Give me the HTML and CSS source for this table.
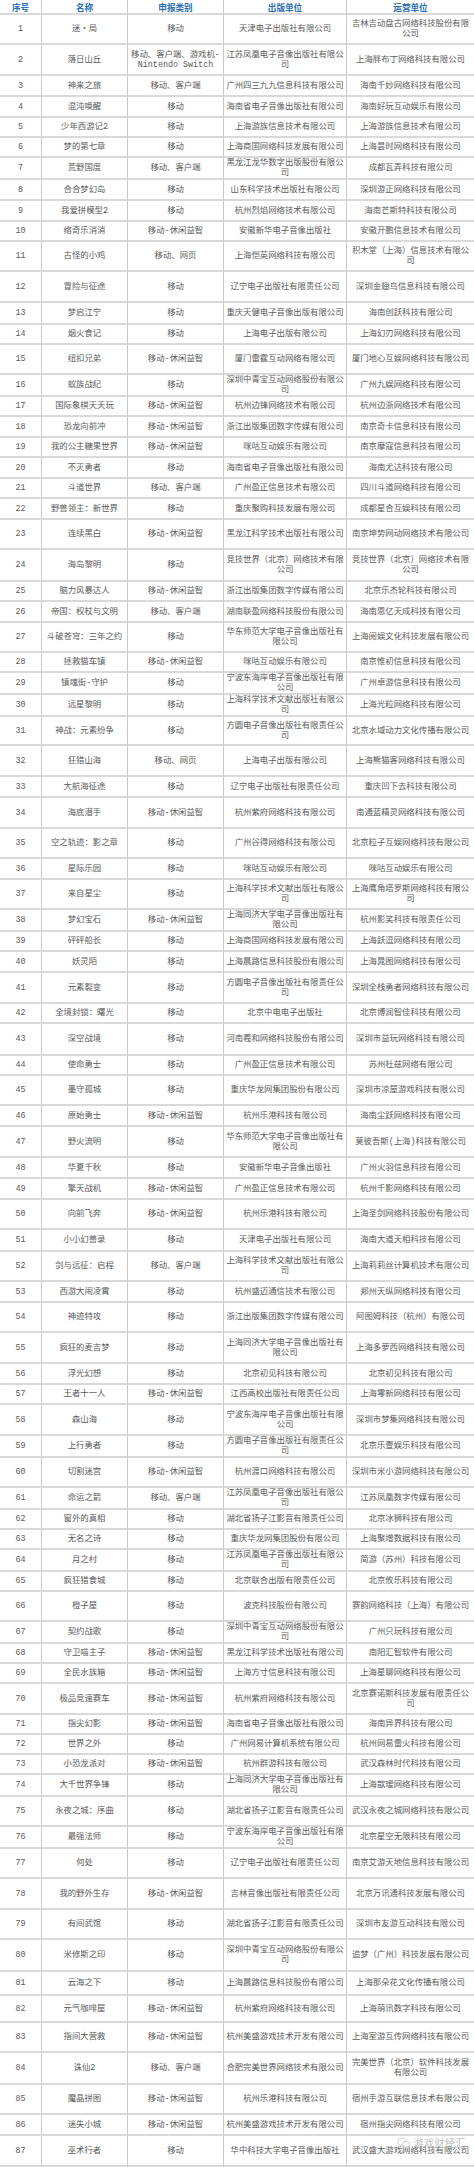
FILE: index.html
```html
<!DOCTYPE html>
<html lang="zh-CN">
<head>
<meta charset="utf-8">
<title>游戏审批名单</title>
<link rel="stylesheet" href="styles.css">
</head>
<body>
<div class="wrap">
<table class="list">
<colgroup><col class="c1"><col class="c2"><col class="c3"><col class="c4"><col class="c5"></colgroup>
<thead>
<tr class="head"><th>序号</th><th>名称</th><th>申报类别</th><th>出版单位</th><th>运营单位</th></tr>
</thead>
<tbody>
<tr class="h30"><td>1</td><td>迷・局</td><td>移动</td><td>天津电子出版社有限公司</td><td>吉林吉动盘古网络科技股份有限公司</td></tr>
<tr class="h31"><td>2</td><td>落日山丘</td><td>移动、客户端、游戏机-Nintendo Switch</td><td>江苏凤凰电子音像出版社有限公司</td><td>上海胖布丁网络科技有限公司</td></tr>
<tr class="h21"><td>3</td><td>神来之旅</td><td>移动、客户端</td><td>广州四三九九信息科技有限公司</td><td>海南千妙网络科技有限公司</td></tr>
<tr class="h21"><td>4</td><td>混沌唤醒</td><td>移动</td><td>海南省电子音像出版社有限公司</td><td>海南好玩互动娱乐有限公司</td></tr>
<tr class="h20"><td>5</td><td>少年西游记2</td><td>移动</td><td>上海游族信息技术有限公司</td><td>上海游族信息技术有限公司</td></tr>
<tr class="h20"><td>6</td><td>梦的第七章</td><td>移动</td><td>上海商国网络科技发展有限公司</td><td>上海昙时网络科技有限公司</td></tr>
<tr class="h22"><td>7</td><td>荒野国度</td><td>移动、客户端</td><td>黑龙江龙华数字出版股份有限公司</td><td>成都瓦弄科技有限公司</td></tr>
<tr class="h21"><td>8</td><td>合合梦幻岛</td><td>移动</td><td>山东科学技术出版社有限公司</td><td>深圳游正网络科技有限公司</td></tr>
<tr class="h21"><td>9</td><td>我爱拼模型2</td><td>移动</td><td>杭州烈焰网络技术有限公司</td><td>海南芒斯特科技有限公司</td></tr>
<tr class="h20"><td>10</td><td>络奇乐消消</td><td>移动-休闲益智</td><td>安徽新华电子音像出版社</td><td>安徽开鹏信息技术有限公司</td></tr>
<tr class="h30"><td>11</td><td>古怪的小鸡</td><td>移动、网页</td><td>上海恺英网络科技有限公司</td><td>积木堂（上海）信息技术有限公司</td></tr>
<tr class="h31"><td>12</td><td>冒险与征途</td><td>移动</td><td>辽宁电子出版社有限责任公司</td><td>深圳金翅鸟信息科技有限公司</td></tr>
<tr class="h22"><td>13</td><td>梦启江宁</td><td>移动</td><td>重庆天健电子音像出版有限公司</td><td>海南创跃科技有限公司</td></tr>
<tr class="h20"><td>14</td><td>烟火食记</td><td>移动</td><td>上海电子出版有限公司</td><td>上海幻刃网络科技有限公司</td></tr>
<tr class="h30"><td>15</td><td>纽扣兄弟</td><td>移动-休闲益智</td><td>厦门雷霆互动网络有限公司</td><td>厦门地心互娱网络科技有限公司</td></tr>
<tr class="h22"><td>16</td><td>蚁族战纪</td><td>移动</td><td>深圳中青宝互动网络股份有限公司</td><td>广州九娱网络科技有限公司</td></tr>
<tr class="h20"><td>17</td><td>国际象棋天天玩</td><td>移动-休闲益智</td><td>杭州边锋网络技术有限公司</td><td>杭州边浙网络技术有限公司</td></tr>
<tr class="h21"><td>18</td><td>恐龙向前冲</td><td>移动-休闲益智</td><td>浙江出版集团数字传媒有限公司</td><td>南京奇卡信息科技有限公司</td></tr>
<tr class="h20"><td>19</td><td>我的公主糖果世界</td><td>移动-休闲益智</td><td>咪咕互动娱乐有限公司</td><td>南京摩寇信息科技有限公司</td></tr>
<tr class="h21"><td>20</td><td>不灭勇者</td><td>移动</td><td>海南省电子音像出版社有限公司</td><td>海南尤达科技有限公司</td></tr>
<tr class="h20"><td>21</td><td>斗道世界</td><td>移动、客户端</td><td>广州盈正信息技术有限公司</td><td>四川斗道网络科技有限公司</td></tr>
<tr class="h21"><td>22</td><td>野兽领主：新世界</td><td>移动</td><td>重庆聚购科技发展有限公司</td><td>成都星合互娱科技有限公司</td></tr>
<tr class="h30"><td>23</td><td>连续黑白</td><td>移动-休闲益智</td><td>黑龙江科学技术出版社有限公司</td><td>南京坤势网动网络技术有限公司</td></tr>
<tr class="h32"><td>24</td><td>海岛黎明</td><td>移动</td><td>竞技世界（北京）网络技术有限公司</td><td>竞技世界（北京）网络技术有限公司</td></tr>
<tr class="h20"><td>25</td><td>脑力风暴达人</td><td>移动-休闲益智</td><td>浙江出版集团数字传媒有限公司</td><td>北京乐杰轮科技有限公司</td></tr>
<tr class="h21"><td>26</td><td>帝国：权杖与文明</td><td>移动、客户端</td><td>湖南联盈网络科技股份有限公司</td><td>海南恩亿天成科技有限公司</td></tr>
<tr class="h30"><td>27</td><td>斗破苍穹：三年之约</td><td>移动</td><td>华东师范大学电子音像出版社有限公司</td><td>上海阅娱文化科技发展有限公司</td></tr>
<tr class="h20"><td>28</td><td>拯救猫车镇</td><td>移动-休闲益智</td><td>咪咕互动娱乐有限公司</td><td>南京惟初信息科技有限公司</td></tr>
<tr class="h22"><td>29</td><td>镇魂街-守护</td><td>移动</td><td>宁波东海岸电子音像出版社有限公司</td><td>广州卓游信息科技有限公司</td></tr>
<tr class="h22"><td>30</td><td>远星黎明</td><td>移动</td><td>上海科学技术文献出版社有限公司</td><td>上海光粒网络科技有限公司</td></tr>
<tr class="h29"><td>31</td><td>神战：元素纷争</td><td>移动</td><td>方圆电子音像出版社有限责任公司</td><td>北京水域动力文化传播有限公司</td></tr>
<tr class="h31"><td>32</td><td>狂猎山海</td><td>移动、网页</td><td>上海电子出版有限公司</td><td>上海熊猫客网络科技有限公司</td></tr>
<tr class="h21"><td>33</td><td>大航海征途</td><td>移动</td><td>辽宁电子出版社有限责任公司</td><td>重庆凹下去科技有限公司</td></tr>
<tr class="h31"><td>34</td><td>海底潜手</td><td>移动-休闲益智</td><td>杭州紫府网络科技有限公司</td><td>南通蓝精灵网络科技有限公司</td></tr>
<tr class="h30"><td>35</td><td>空之轨迹：影之章</td><td>移动</td><td>广州谷得网络科技有限公司</td><td>北京粒子互娱网络科技有限公司</td></tr>
<tr class="h21"><td>36</td><td>星际乐园</td><td>移动</td><td>咪咕互动娱乐有限公司</td><td>咪咕互动娱乐有限公司</td></tr>
<tr class="h30"><td>37</td><td>来自星尘</td><td>移动</td><td>上海科学技术文献出版社有限公司</td><td>上海鹰角塔罗斯网络科技有限公司</td></tr>
<tr class="h22"><td>38</td><td>梦幻宝石</td><td>移动-休闲益智</td><td>上海同济大学电子音像出版社有限公司</td><td>杭州影笑科技有限责任公司</td></tr>
<tr class="h20"><td>39</td><td>砰砰船长</td><td>移动</td><td>上海商国网络科技发展有限公司</td><td>上海跃逗网络科技有限公司</td></tr>
<tr class="h21"><td>40</td><td>妖灵陌</td><td>移动</td><td>上海晨路信息科技股份有限公司</td><td>上海晁图网络科技有限公司</td></tr>
<tr class="h31"><td>41</td><td>元素裂变</td><td>移动</td><td>方圆电子音像出版社有限责任公司</td><td>深圳全栈勇者网络科技有限公司</td></tr>
<tr class="h20"><td>42</td><td>全境封锁：曙光</td><td>移动</td><td>北京中电电子出版社</td><td>北京博润智佳科技有限公司</td></tr>
<tr class="h32"><td>43</td><td>深空战境</td><td>移动</td><td>河南羲和网络科技股份有限公司</td><td>深圳市益玩网络科技有限公司</td></tr>
<tr class="h20"><td>44</td><td>使命勇士</td><td>移动</td><td>广州盈正信息技术有限公司</td><td>苏州杜兹网络有限公司</td></tr>
<tr class="h30"><td>45</td><td>墨守孤城</td><td>移动</td><td>重庆华龙网集团股份有限公司</td><td>深圳市凉屋游戏科技有限公司</td></tr>
<tr class="h21"><td>46</td><td>原始勇士</td><td>移动-休闲益智</td><td>杭州乐港科技有限公司</td><td>海南尘跃网络科技有限公司</td></tr>
<tr class="h31"><td>47</td><td>野火流明</td><td>移动</td><td>华东师范大学电子音像出版社有限公司</td><td>莫彼吾斯(上海)科技有限公司</td></tr>
<tr class="h21"><td>48</td><td>华夏千秋</td><td>移动</td><td>安徽新华电子音像出版社</td><td>广州火羽信息科技有限公司</td></tr>
<tr class="h21"><td>49</td><td>擎天战机</td><td>移动-休闲益智</td><td>广州盈正信息技术有限公司</td><td>杭州千影网络科技有限公司</td></tr>
<tr class="h30"><td>50</td><td>向前飞奔</td><td>移动-休闲益智</td><td>杭州乐港科技有限公司</td><td>上海圣剑网络科技股份有限公司</td></tr>
<tr class="h22"><td>51</td><td>小小幻兽录</td><td>移动</td><td>天津电子出版社有限公司</td><td>海南大道天相科技有限公司</td></tr>
<tr class="h30"><td>52</td><td>剑与远征：启程</td><td>移动、客户端</td><td>上海科学技术文献出版社有限公司</td><td>上海莉莉丝计算机技术有限公司</td></tr>
<tr class="h21"><td>53</td><td>西游大闹凌霄</td><td>移动</td><td>杭州盛迈通信技术有限公司</td><td>郑州天纵网络科技有限公司</td></tr>
<tr class="h30"><td>54</td><td>神迹特攻</td><td>移动</td><td>浙江出版集团数字传媒有限公司</td><td>阿图姆科技（杭州）有限公司</td></tr>
<tr class="h31"><td>55</td><td>疯狂的麦吉梦</td><td>移动</td><td>上海同济大学电子音像出版社有限公司</td><td>上海多萝西网络科技有限公司</td></tr>
<tr class="h21"><td>56</td><td>浮光幻想</td><td>移动</td><td>北京初见科技有限公司</td><td>北京初见科技有限公司</td></tr>
<tr class="h20"><td>57</td><td>王者十一人</td><td>移动-休闲益智</td><td>江西高校出版社有限责任公司</td><td>上海零新网络科技有限公司</td></tr>
<tr class="h31"><td>58</td><td>森山海</td><td>移动</td><td>宁波东海岸电子音像出版社有限公司</td><td>深圳市梦集网络科技有限公司</td></tr>
<tr class="h22"><td>59</td><td>上行勇者</td><td>移动</td><td>方圆电子音像出版社有限责任公司</td><td>北京乐壹娱乐科技有限公司</td></tr>
<tr class="h30"><td>60</td><td>切割迷宫</td><td>移动-休闲益智</td><td>杭州渡口网络科技有限公司</td><td>深圳市米小游网络科技有限公司</td></tr>
<tr class="h22"><td>61</td><td>命运之箭</td><td>移动、客户端</td><td>江苏凤凰电子音像出版社有限公司</td><td>江苏凤凰数字传媒有限公司</td></tr>
<tr class="h20"><td>62</td><td>窗外的真相</td><td>移动</td><td>湖北省扬子江影音有限责任公司</td><td>北京冰狮科技有限公司</td></tr>
<tr class="h20"><td>63</td><td>无名之诗</td><td>移动</td><td>重庆华龙网集团股份有限公司</td><td>上海聚增数据科技有限公司</td></tr>
<tr class="h22"><td>64</td><td>月之村</td><td>移动</td><td>江苏凤凰电子音像出版社有限公司</td><td>简游（苏州）科技有限公司</td></tr>
<tr class="h20"><td>65</td><td>疯狂猎食城</td><td>移动</td><td>北京联合出版有限责任公司</td><td>北京攸乐科技有限公司</td></tr>
<tr class="h30"><td>66</td><td>橙子屋</td><td>移动</td><td>波克科技股份有限公司</td><td>赛韵网络科技（上海）有限公司</td></tr>
<tr class="h22"><td>67</td><td>契约战歌</td><td>移动</td><td>深圳中青宝互动网络股份有限公司</td><td>广州只玩科技有限公司</td></tr>
<tr class="h20"><td>68</td><td>守卫喵主子</td><td>移动-休闲益智</td><td>黑龙江科学技术出版社有限公司</td><td>南阳汇智软件有限公司</td></tr>
<tr class="h20"><td>69</td><td>全民水族箱</td><td>移动-休闲益智</td><td>上海方寸信息科技有限公司</td><td>上海星聊网络科技有限公司</td></tr>
<tr class="h31"><td>70</td><td>极品竞速赛车</td><td>移动-休闲益智</td><td>杭州紫府网络科技有限公司</td><td>北京赛诺斯科技发展有限责任公司</td></tr>
<tr class="h20"><td>71</td><td>指尖幻影</td><td>移动-休闲益智</td><td>海南省电子音像出版社有限公司</td><td>海南异界科技有限公司</td></tr>
<tr class="h20"><td>72</td><td>世界之外</td><td>移动</td><td>广州网易计算机系统有限公司</td><td>杭州网易雷火科技有限公司</td></tr>
<tr class="h20"><td>73</td><td>小恐龙派对</td><td>移动-休闲益智</td><td>杭州群游科技有限公司</td><td>武汉森林时代科技有限公司</td></tr>
<tr class="h22"><td>74</td><td>大千世界争锋</td><td>移动</td><td>上海同济大学电子音像出版社有限公司</td><td>上海歆瑷网络科技有限公司</td></tr>
<tr class="h30"><td>75</td><td>永夜之城：序曲</td><td>移动</td><td>湖北省扬子江影音有限责任公司</td><td>武汉永夜之城网络科技有限公司</td></tr>
<tr class="h22"><td>76</td><td>最强法师</td><td>移动</td><td>宁波东海岸电子音像出版社有限公司</td><td>北京星空无限科技有限公司</td></tr>
<tr class="h30"><td>77</td><td>何处</td><td>移动</td><td>辽宁电子出版社有限责任公司</td><td>南京艾游天地信息科技有限公司</td></tr>
<tr class="h31"><td>78</td><td>我的野外生存</td><td>移动-休闲益智</td><td>吉林音像出版社有限责任公司</td><td>北京万讯通科技发展有限公司</td></tr>
<tr class="h30"><td>79</td><td>有间武馆</td><td>移动</td><td>湖北省扬子江影音有限责任公司</td><td>深圳市友游互动科技有限公司</td></tr>
<tr class="h32"><td>80</td><td>米修斯之印</td><td>移动</td><td>深圳中青宝互动网络股份有限公司</td><td>追梦（广州）科技发展有限公司</td></tr>
<tr class="h24"><td>81</td><td>云海之下</td><td>移动</td><td>上海晨路信息科技股份有限公司</td><td>上海那朵花文化传播有限公司</td></tr>
<tr class="h27"><td>82</td><td>元气咖啡屋</td><td>移动-休闲益智</td><td>杭州紫府网络科技有限公司</td><td>上海萌讯数字科技有限公司</td></tr>
<tr class="h30"><td>83</td><td>指间大营救</td><td>移动-休闲益智</td><td>杭州美盛游戏技术开发有限公司</td><td>上海室游互传网络科技有限公司</td></tr>
<tr class="h32"><td>84</td><td>诛仙2</td><td>移动、客户端</td><td>合肥完美世界网络技术有限公司</td><td>完美世界（北京）软件科技发展有限公司</td></tr>
<tr class="h30"><td>85</td><td>魔晶拼图</td><td>移动-休闲益智</td><td>杭州乐港科技有限公司</td><td>宿州手游互联信息技术有限公司</td></tr>
<tr class="h21"><td>86</td><td>迷失小城</td><td>移动-休闲益智</td><td>杭州美盛游戏技术开发有限公司</td><td>宿州指尖网络科技有限公司</td></tr>
<tr class="h31"><td>87</td><td>巫术行者</td><td>移动</td><td>华中科技大学电子音像出版社</td><td>武汉盛大游戏网络科技有限公司</td></tr>
</tbody>
</table>
<div class="mark">
<svg class="mark-icon" viewBox="0 0 16 14" width="14" height="12" aria-hidden="true">
<ellipse cx="6" cy="5.5" rx="5.2" ry="4.3" fill="none" stroke="#b9b9b9" stroke-width="1"/>
<ellipse cx="10.5" cy="8.8" rx="4.3" ry="3.5" fill="#fff" stroke="#b9b9b9" stroke-width="1"/>
<circle cx="4.2" cy="4.4" r="0.7" fill="#b9b9b9"/>
<circle cx="7.8" cy="4.4" r="0.7" fill="#b9b9b9"/>
</svg>
<span class="mark-text">游戏财经汇</span>
</div>
</div>
</body>
</html>
```
FILE: styles.css
```css
html, body {
  margin: 0;
  padding: 0;
  background: #ffffff;
}

.wrap {
  position: relative;
  width: 474px;
}

.list {
  width: 474px;
  table-layout: fixed;
  border-collapse: separate;
  border-spacing: 0;
  font-family: "Liberation Mono", "Noto Sans CJK SC", monospace;
  font-size: 8.4px;
  line-height: 10px;
  color: #5a5a5a;
}

.c1 { width: 42px; }
.c2 { width: 86px; }
.c3 { width: 96px; }
.c4 { width: 123px; }
.c5 { width: 127px; }

.list th,
.list td {
  box-sizing: border-box;
  padding: 0 1px;
  text-align: center;
  vertical-align: middle;
  border-bottom: 2px solid #d9d9d9;
  border-right: 1px solid #c9c9c9;
  word-break: break-all;
}

.list th:last-child,
.list td:last-child {
  border-right: none;
}

.list th {
  font-family: "Noto Sans CJK SC", sans-serif;
  font-weight: 700;
  font-size: 8.6px;
  color: #2a6db3;
}

.head { height: 15px; }
.h20 { height: 20px; }
.h21 { height: 21px; }
.h22 { height: 22px; }
.h24 { height: 24px; }
.h27 { height: 27px; }
.h29 { height: 29px; }
.h30 { height: 30px; }
.h31 { height: 31px; }
.h32 { height: 32px; }

.mark {
  position: absolute;
  right: 8px;
  bottom: 18px;
  display: flex;
  align-items: center;
  gap: 3px;
  opacity: 0.85;
}

.mark-text {
  font-family: "Noto Sans CJK SC", sans-serif;
  font-size: 10px;
  line-height: 12px;
  color: #b4b4b4;
  letter-spacing: 0.5px;
}
```
